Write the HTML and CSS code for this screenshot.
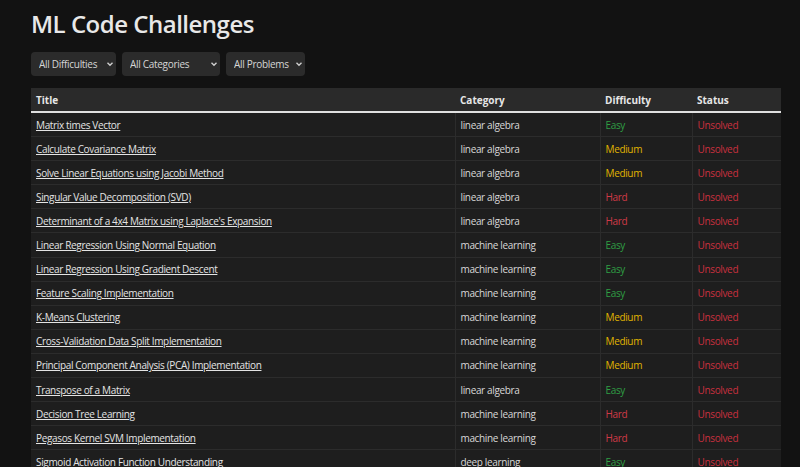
FILE: index.html
```html
<!DOCTYPE html>
<html lang="en">
<head>
<meta charset="utf-8">
<title>ML Code Challenges</title>
<link rel="stylesheet" href="styles.css">
</head>
<body>
<div class="page">
  <h1 class="title">ML Code Challenges</h1>
  <div class="filters">
    <select class="filter f-diff"><option>All Difficulties</option><option>Easy</option><option>Medium</option><option>Hard</option></select>
    <select class="filter f-cat"><option>All Categories</option><option>linear algebra</option><option>machine learning</option><option>deep learning</option></select>
    <select class="filter f-prob"><option>All Problems</option><option>Solved</option><option>Unsolved</option></select>
  </div>
  <table class="problems">
    <thead>
      <tr><th class="c-title">Title</th><th class="c-cat">Category</th><th class="c-diff">Difficulty</th><th class="c-status">Status</th></tr>
    </thead>
    <tbody>
      <tr><td><a href="#">Matrix times Vector</a></td><td>linear algebra</td><td class="easy">Easy</td><td class="unsolved">Unsolved</td></tr>
      <tr><td><a href="#">Calculate Covariance Matrix</a></td><td>linear algebra</td><td class="medium">Medium</td><td class="unsolved">Unsolved</td></tr>
      <tr><td><a href="#">Solve Linear Equations using Jacobi Method</a></td><td>linear algebra</td><td class="medium">Medium</td><td class="unsolved">Unsolved</td></tr>
      <tr><td><a href="#">Singular Value Decomposition (SVD)</a></td><td>linear algebra</td><td class="hard">Hard</td><td class="unsolved">Unsolved</td></tr>
      <tr><td><a href="#">Determinant of a 4x4 Matrix using Laplace's Expansion</a></td><td>linear algebra</td><td class="hard">Hard</td><td class="unsolved">Unsolved</td></tr>
      <tr><td><a href="#">Linear Regression Using Normal Equation</a></td><td>machine learning</td><td class="easy">Easy</td><td class="unsolved">Unsolved</td></tr>
      <tr><td><a href="#">Linear Regression Using Gradient Descent</a></td><td>machine learning</td><td class="easy">Easy</td><td class="unsolved">Unsolved</td></tr>
      <tr><td><a href="#">Feature Scaling Implementation</a></td><td>machine learning</td><td class="easy">Easy</td><td class="unsolved">Unsolved</td></tr>
      <tr><td><a href="#">K-Means Clustering</a></td><td>machine learning</td><td class="medium">Medium</td><td class="unsolved">Unsolved</td></tr>
      <tr><td><a href="#">Cross-Validation Data Split Implementation</a></td><td>machine learning</td><td class="medium">Medium</td><td class="unsolved">Unsolved</td></tr>
      <tr><td><a href="#">Principal Component Analysis (PCA) Implementation</a></td><td>machine learning</td><td class="medium">Medium</td><td class="unsolved">Unsolved</td></tr>
      <tr><td><a href="#">Transpose of a Matrix</a></td><td>linear algebra</td><td class="easy">Easy</td><td class="unsolved">Unsolved</td></tr>
      <tr><td><a href="#">Decision Tree Learning</a></td><td>machine learning</td><td class="hard">Hard</td><td class="unsolved">Unsolved</td></tr>
      <tr><td><a href="#">Pegasos Kernel SVM Implementation</a></td><td>machine learning</td><td class="hard">Hard</td><td class="unsolved">Unsolved</td></tr>
      <tr><td><a href="#">Sigmoid Activation Function Understanding</a></td><td>deep learning</td><td class="easy">Easy</td><td class="unsolved">Unsolved</td></tr>
    </tbody>
  </table>
</div>
</body>
</html>
```

FILE: styles.css
```css
html, body {
  margin: 0;
  padding: 0;
  background: #121212;
  color: #e0e0e0;
  font-family: "Open Sans", "Noto Sans", "DejaVu Sans", sans-serif;
}

.page {
  padding: 8px 19px 0 31px;
}

.title {
  margin: 0;
  font-size: 24px;
  line-height: 32px;
  font-weight: 600;
  color: #e8e8e8;
  letter-spacing: -0.5px;
}

.filters {
  display: flex;
  gap: 6px;
  margin-top: 12px;
}

.filter {
  appearance: none;
  -webkit-appearance: none;
  height: 24px;
  padding: 0 14px 0 8px;
  border: none;
  border-radius: 4px;
  background-color: #2b2b2b;
  background-image: url("data:image/svg+xml;utf8,<svg xmlns='http://www.w3.org/2000/svg' width='8' height='6' viewBox='0 0 8 6'><path d='M1.5 1.8 L4 4.2 L6.5 1.8' fill='none' stroke='%23d0d0d0' stroke-width='1.4'/></svg>");
  background-repeat: no-repeat;
  background-position: right 2px center;
  color: #d6d6d6;
  font-family: inherit;
  font-size: 10px;
  letter-spacing: -0.3px;
}

.f-diff { width: 85px; }
.f-cat { width: 98px; }
.f-prob { width: 79px; }

.problems {
  margin-top: 12px;
  width: 750px;
  border-collapse: collapse;
  background: #1e1e1e;
  font-size: 10px;
  letter-spacing: -0.35px;
}

.problems th {
  background: #2a2a2a;
  color: #e6e6e6;
  font-weight: 700;
  text-align: left;
  height: 23px;
  padding: 0 5px;
  border-bottom: 2px solid #e0e0e0;
  letter-spacing: 0;
}

.problems td {
  height: 23.1px;
  padding: 0 5px;
  border-bottom: 1px solid #2c2c2c;
  border-left: 1px solid #2c2c2c;
  color: #d8d8d8;
}

.problems td:first-child { border-left: none; }

.c-title { width: 414px; }
.c-cat { width: 135px; }
.c-diff { width: 82px; }

.problems a {
  color: #e4e4e4;
  text-decoration: underline;
}

.easy { color: #2f9e44 !important; }
.medium { color: #e0b400 !important; }
.hard { color: #d03a47 !important; }
.unsolved { color: #c9303f !important; }
```
